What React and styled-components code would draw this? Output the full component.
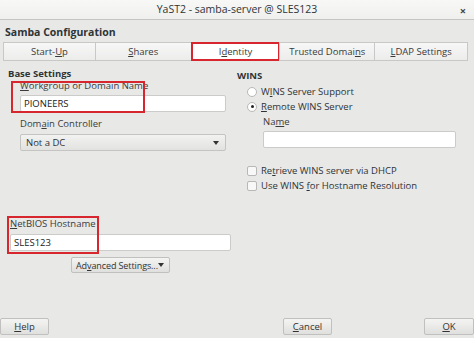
import React from 'react';
import styled, { createGlobalStyle } from 'styled-components';

const textMain = '#2e3436';
const bgMain = '#e8e8e7';
const borderGray = '#b8b8b6';
const annotRed = '#d8262e';

const Global = createGlobalStyle`
  html, body { margin: 0; padding: 0; background: ${bgMain}; }
  * { box-sizing: border-box; }
`;

const Window = styled.div`
  position: relative;
  width: 474px;
  height: 338px;
  background: ${bgMain};
  color: ${textMain};
  font-family: "Open Sans", "Noto Sans", sans-serif;
  font-size: 9.5px;
  display: flex;
  flex-direction: column;
  overflow: hidden;
  white-space: nowrap;
`;

const TitleBar = styled.div`
  height: 20px;
  flex: none;
  display: flex;
  align-items: center;
  justify-content: center;
  position: relative;
  background: linear-gradient(#f8f8f7, #efefee);
  border-bottom: 1px solid #c4c4c2;
  font-size: 10.5px;
  padding-bottom: 2px;
`;

const Close = styled.span`
  position: absolute;
  right: 8px;
  top: 3px;
  font-size: 11px;
  font-weight: bold;
  color: #444;
`;

const Heading = styled.div`
  height: 22px;
  flex: none;
  display: flex;
  align-items: center;
  padding-left: 5px;
  padding-top: 1px;
  font-weight: bold;
  font-size: 10.5px;
`;

const TabRow = styled.div`
  display: flex;
  height: 19px;
  flex: none;
  margin: 0 6px 0 3px;
`;

const Tab = styled.div`
  width: ${p => p.$w}px;
  display: flex;
  align-items: center;
  justify-content: center;
  background: ${p => (p.$active ? '#ffffff' : 'linear-gradient(#f7f7f7, #ececeb)')};
  border: ${p => (p.$active ? `2px solid ${annotRed}` : `1px solid #c8c8c6`)};
  margin-left: ${p => (p.$first ? 0 : -1)}px;
  color: #3a3a3a;
`;

const Mn = styled.span`
  text-decoration: underline;
  text-underline-offset: 1px;
`;

const Body = styled.div`
  display: grid;
  grid-template-columns: 229px 1fr;
  padding: 7px 18px 0 8px;
`;

const Column = styled.div`
  display: flex;
  flex-direction: column;
  padding-top: ${p => p.$pt || 0}px;
`;

const GroupTitle = styled.div`
  font-weight: bold;
  height: 12px;
  line-height: 12px;
  margin-bottom: ${p => p.$mb || 0}px;
`;

const Field = styled.div`
  display: flex;
  flex-direction: column;
  padding-left: ${p => p.$indent || 0}px;
  padding-right: ${p => p.$right || 0}px;
  margin-top: ${p => p.$mt || 0}px;
`;

const Label = styled.div`
  height: 12px;
  line-height: 12px;
  margin-bottom: ${p => p.$mb ?? 3}px;
  color: #3b3b3b;
`;

const Input = styled.div`
  height: 17px;
  background: #fff;
  border: 1px solid #cbcbc9;
  border-radius: 2px;
  display: flex;
  align-items: center;
  padding-left: 3px;
  color: #222;
`;

const Combo = styled.div`
  height: 17px;
  background: linear-gradient(#f2f2f1, #e2e2e0);
  border: 1px solid #c4c4c2;
  border-radius: 2px;
  display: flex;
  align-items: center;
  justify-content: space-between;
  padding: 0 6px 0 5px;
`;

const Arrow = styled.span`
  flex: none;
  width: 0;
  height: 0;
  border-left: 3px solid transparent;
  border-right: 3px solid transparent;
  border-top: 4px solid #333;
`;

const ButtonRow = styled.div`
  display: flex;
  padding-left: ${p => p.$pl || 0}px;
  margin-top: ${p => p.$mt || 0}px;
`;

const Button = styled.div`
  width: ${p => p.$w}px;
  height: ${p => p.$h || 17}px;
  display: flex;
  align-items: center;
  justify-content: ${p => (p.$menu ? 'space-between' : 'center')};
  padding: ${p => (p.$menu ? '0 5px 0 4px' : '0')};
  margin-left: ${p => p.$ml || 0};
  background: linear-gradient(#f4f4f3, #dfdfdd);
  border: 1px solid #c0c0be;
  border-radius: 2px;
  color: #333;
`;

const MenuText = styled.span`
  font-size: 9px;
  letter-spacing: -0.1px;
`;

const Choice = styled.div`
  display: flex;
  align-items: center;
  height: 15px;
  padding-left: 10px;
  gap: 4px;
  margin-top: ${p => p.$mt || 0}px;
`;

const Radio = styled.span`
  width: 10px;
  height: 10px;
  border-radius: 50%;
  border: 1px solid ${borderGray};
  background: #fff;
  display: flex;
  align-items: center;
  justify-content: center;
  &::after {
    content: '';
    width: 3px;
    height: 3px;
    border-radius: 50%;
    background: ${p => (p.$on ? '#222' : 'transparent')};
  }
`;

const Check = styled.span`
  width: 10px;
  height: 10px;
  border-radius: 2px;
  border: 1px solid ${borderGray};
  background: #f8f8f8;
`;

const Footer = styled.div`
  margin-top: auto;
  height: 17px;
  margin-bottom: 3px;
  display: flex;
  align-items: center;
`;

// red annotation boxes drawn over the dialog
const Mark = styled.div`
  position: absolute;
  border: 2px solid ${annotRed};
  left: ${p => p.$x}px;
  top: ${p => p.$y}px;
  width: ${p => p.$w}px;
  height: ${p => p.$h}px;
  pointer-events: none;
`;

export default function App() {
  return (
    <>
      <Global />
      <Window>
        <TitleBar>
          YaST2 - samba-server @ SLES123
          <Close>×</Close>
        </TitleBar>
        <Heading>Samba Configuration</Heading>
        <TabRow>
          <Tab $w={93} $first>Start-<Mn>U</Mn>p</Tab>
          <Tab $w={97}><Mn>S</Mn>hares</Tab>
          <Tab $w={90} $active>I<Mn>d</Mn>entity</Tab>
          <Tab $w={96}>Trusted Domai<Mn>n</Mn>s</Tab>
          <Tab $w={94}><Mn>L</Mn>DAP Settings</Tab>
        </TabRow>
        <Body>
          <Column>
            <GroupTitle>Base Settings</GroupTitle>
            <Field $indent={12} $right={11}>
              <Label><Mn>W</Mn>orkgroup or Domain Name</Label>
              <Input>PIONEERS</Input>
            </Field>
            <Field $indent={12} $right={11} $mt={6}>
              <Label $mb={4}>Dom<Mn>a</Mn>in Controller</Label>
              <Combo>
                Not a DC
                <Arrow />
              </Combo>
            </Field>
            <Field $indent={2} $right={6} $mt={67}>
              <Label $mb={4}><Mn>N</Mn>etBIOS Hostname</Label>
              <Input>SLES123</Input>
            </Field>
            <ButtonRow $pl={63} $mt={6}>
              <Button $w={99} $h={16} $menu>
                <MenuText>Ad<Mn>v</Mn>anced Settings...</MenuText>
                <Arrow />
              </Button>
            </ButtonRow>
          </Column>
          <Column $pt={2}>
            <GroupTitle $mb={2}>WINS</GroupTitle>
            <Choice>
              <Radio />
              <span>W<Mn>I</Mn>NS Server Support</span>
            </Choice>
            <Choice>
              <Radio $on />
              <span><Mn>R</Mn>emote WINS Server</span>
            </Choice>
            <Field $indent={26} $mt={2}>
              <Label>Na<Mn>m</Mn>e</Label>
              <Input />
            </Field>
            <Choice $mt={15}>
              <Check />
              <span>Re<Mn>t</Mn>rieve WINS server via DHCP</span>
            </Choice>
            <Choice>
              <Check />
              <span>Use WINS <Mn>f</Mn>or Hostname Resolution</span>
            </Choice>
          </Column>
        </Body>
        <Footer>
          <Button $w={49}><span><Mn>H</Mn>elp</span></Button>
          <Button $w={49} $ml="auto"><span><Mn>C</Mn>ancel</span></Button>
          <Button $w={50} $ml="92px"><span><Mn>O</Mn>K</span></Button>
        </Footer>
        <Mark $x={11} $y={81} $w={134} $h={32} />
        <Mark $x={7} $y={216} $w={92} $h={38} />
      </Window>
    </>
  );
}
